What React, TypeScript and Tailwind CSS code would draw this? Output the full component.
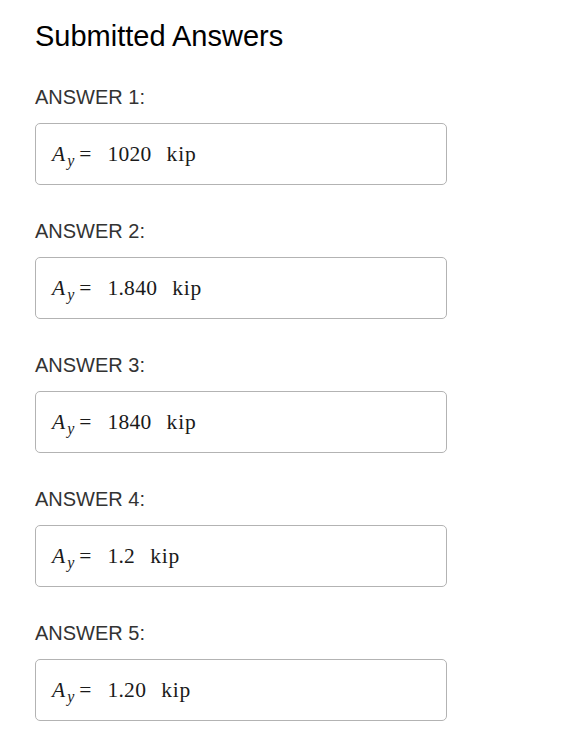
import React from "react";

const answers = ["1020", "1.840", "1840", "1.2", "1.20"];

function MathLine({ value }: { value: string }) {
  return (
    <div
      className="flex items-baseline text-[21.5px] leading-[25px] text-[#1a1a1a]"
      style={{ fontFamily: '"Liberation Serif", "Times New Roman", serif' }}
    >
      <span className="italic">A</span>
      <span className="italic text-[16px] leading-none relative top-[5px] ml-[2px]">y</span>
      <span className="ml-[5px]">=</span>
      <span className="ml-[16px] tracking-[0.3px]">{value}</span>
      <span className="ml-[15px] tracking-[0.8px]">kip</span>
    </div>
  );
}

export default function App() {
  return (
    <div
      className="bg-white min-h-[751px] pl-[35px] pt-[19px] text-black"
      style={{ fontFamily: '"Liberation Sans", Arial, sans-serif' }}
    >
      <h1 className="text-[29px] leading-[34px] font-normal">Submitted Answers</h1>
      <div className="flex flex-col">
        {answers.map((a, i) => (
          <div key={i} className={i === 0 ? "mt-[32px]" : "mt-[34px]"}>
            <div className="text-[20px] leading-[24px] text-[#333]">ANSWER {i + 1}:</div>
            <div className="mt-[14px] w-[412px] h-[62px] border border-[#b3b3b3] rounded-[5px] flex items-center pl-[16px]">
              <MathLine value={a} />
            </div>
          </div>
        ))}
      </div>
    </div>
  );
}
